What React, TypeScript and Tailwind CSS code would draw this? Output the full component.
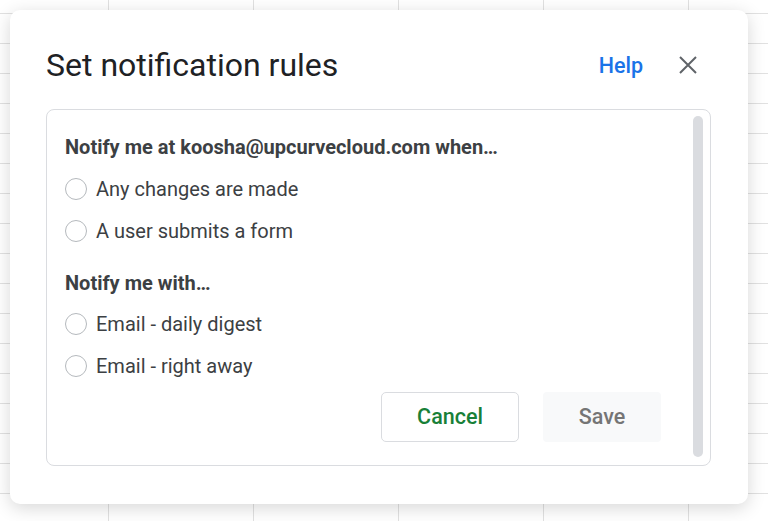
export default function App() {
  const font = { fontFamily: 'Roboto, "Liberation Sans", sans-serif' }

  return (
    <div
      className="h-[521px] w-[768px] overflow-hidden bg-white p-[10px] bg-[linear-gradient(to_right,#e1e1e1_1px,transparent_1px),linear-gradient(to_bottom,#e1e1e1_1px,transparent_1px)] bg-[size:145px_30px] bg-[position:108px_13px]"
      style={font}
    >
      <div className="flex h-[494px] w-[738px] flex-col rounded-[10px] bg-white shadow-[0_4px_18px_rgba(0,0,0,0.16)]">
        <div className="flex items-center pl-[36px] pr-[51px] pt-[37px]">
          <h1 className="flex-1 text-[32px] leading-[36px] text-[#202124]">Set notification rules</h1>
          <button className="mr-[36px] mt-[3px] text-[21.5px] font-medium text-[#1a73e8]">Help</button>
          <button className="text-[#5f6368]">
            <svg width="18" height="18" viewBox="0 0 18 18" fill="none" stroke="currentColor" strokeWidth="2">
              <path d="M1 1 17 17M17 1 1 17" />
            </svg>
          </button>
        </div>

        <div className="relative ml-[36px] mt-[26px] h-[357px] w-[665px] rounded-[8px] border border-[#dadce0] pl-[18px] pt-[25px] text-[#3c4043]">
          <div className="flex h-[24px] items-center text-[20px] font-bold">
            Notify me at koosha@upcurvecloud.com when…
          </div>
          <div className="mt-[9px]">
            <Radio label="Any changes are made" />
            <Radio label="A user submits a form" />
          </div>
          <div className="mt-[19px] flex h-[24px] items-center text-[20px] font-bold">Notify me with…</div>
          <div className="mt-[8px]">
            <Radio label="Email - daily digest" />
            <Radio label="Email - right away" />
          </div>

          <div className="mt-[5px] flex justify-end gap-[24px] pr-[49px]">
            <button className="h-[50px] w-[138px] rounded-[5px] border border-[#dadce0] text-[21.5px] font-medium text-[#188038]">
              Cancel
            </button>
            <button className="h-[50px] w-[118px] rounded-[4px] bg-[#f8f9fa] text-[21.5px] font-medium text-[#757575]">
              Save
            </button>
          </div>

          <div className="absolute bottom-[8px] right-[7px] top-[6px] w-[10px] rounded-full bg-[#dadce0]" />
        </div>
      </div>
    </div>
  )
}

function Radio({ label }: { label: string }) {
  return (
    <label className="flex h-[42px] items-center gap-[9px] text-[20px]">
      <span className="h-[22px] w-[22px] rounded-full border-[1.5px] border-[#b5b9bd]" />
      {label}
    </label>
  )
}
